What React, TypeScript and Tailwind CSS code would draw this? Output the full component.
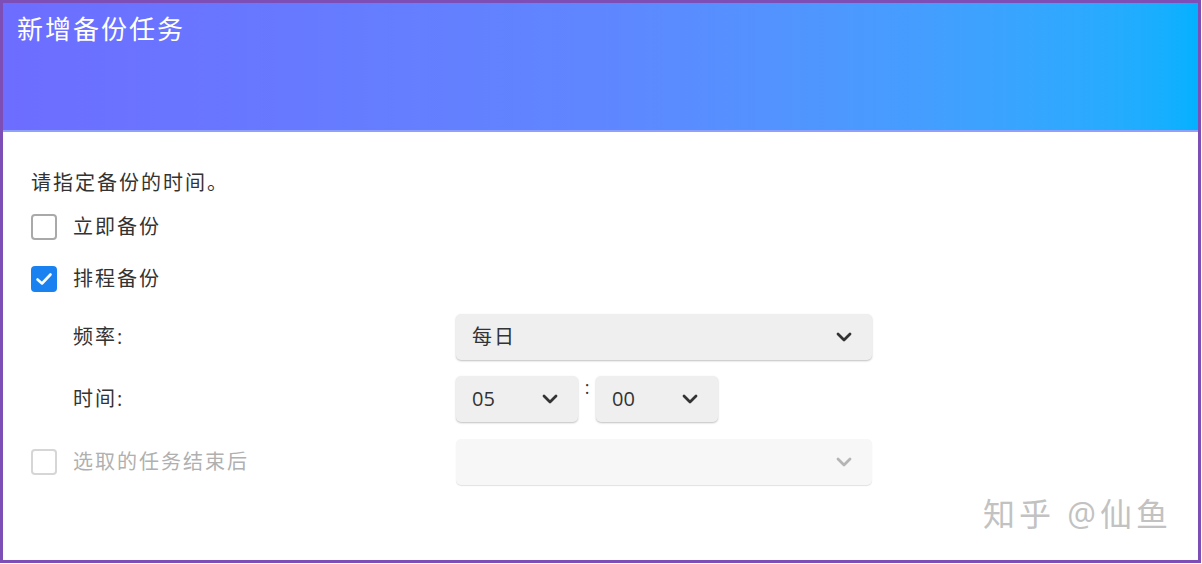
import React from 'react';

const font = { fontFamily: '"Open Sans", "Noto Sans CJK SC", sans-serif' };

function Chevron({ muted = false }: { muted?: boolean }) {
  return (
    <svg width="16" height="10" viewBox="0 0 16 10" aria-hidden>
      <path
        d="M2 2 L8 8 L14 2"
        fill="none"
        stroke={muted ? '#b5b5b5' : '#333333'}
        strokeWidth="2.8"
        strokeLinecap="round"
        strokeLinejoin="round"
      />
    </svg>
  );
}

function Select({ value, width, disabled = false, cjk = false }: { value?: string; width: string; disabled?: boolean; cjk?: boolean }) {
  return (
    <div
      className={`${width} h-[46px] rounded-[5px] flex items-center justify-between pl-4 pr-5 ${
        disabled ? 'bg-[#f7f7f7] shadow-[0_1px_1px_rgba(0,0,0,0.12)]' : 'bg-[#efefef] shadow-[0_1px_2px_rgba(0,0,0,0.25)]'
      }`}
    >
      <span className={`text-[20px] text-[#333] ${cjk ? 'tracking-[2px]' : ''}`}>{value}</span>
      <Chevron muted={disabled} />
    </div>
  );
}

function Box({ checked = false, disabled = false }: { checked?: boolean; disabled?: boolean }) {
  if (checked) {
    return (
      <div className="w-[26px] h-[26px] rounded-[4px] bg-[#1a82f0] flex items-center justify-center">
        <svg width="18" height="14" viewBox="0 0 18 14" aria-hidden>
          <path d="M2.5 7.5 L7 11.5 L15.5 2.5" fill="none" stroke="white" strokeWidth="2.6" strokeLinecap="round" strokeLinejoin="round" />
        </svg>
      </div>
    );
  }
  return (
    <div
      className={`w-[26px] h-[26px] rounded-[4px] border-2 bg-white ${disabled ? 'border-[#d6d6d6]' : 'border-[#a9a9a9]'}`}
    />
  );
}

export default function App() {
  return (
    <div className="w-[1202px] h-[564px] bg-white" style={font}>
      <div className="w-[1201px] h-[563px] border-[3px] border-[#7d4fb6] flex flex-col relative">
        <div className="h-[129px] bg-gradient-to-r from-[#6d6dff] via-[#5f86ff] to-[#02b1fe] border-b-2 border-[#8fa0ff] px-[14px] pt-[9px]">
          <h1 className="text-[26px] tracking-[2px] text-white leading-[34px]">新增备份任务</h1>
        </div>

        <div className="pl-[28px] pt-[38px] text-[#333]">
          <p className="text-[20px] tracking-[2px] leading-[26px]">请指定备份的时间。</p>

          <label className="flex items-center gap-[16px] mt-[17px] h-[28px]">
            <Box />
            <span className="text-[20px] tracking-[2px]">立即备份</span>
          </label>
          <label className="flex items-center gap-[16px] mt-[24px] h-[28px]">
            <Box checked />
            <span className="text-[20px] tracking-[2px]">排程备份</span>
          </label>

          <div className="flex items-center mt-[21px]">
            <span className="w-[425px] pl-[42px] text-[20px] tracking-[2px]">频率:</span>
            <Select value="每日" width="w-[416px]" cjk />
          </div>

          <div className="flex items-center mt-[16px]">
            <span className="w-[425px] pl-[42px] text-[20px] tracking-[2px]">时间:</span>
            <Select value="05" width="w-[122px]" />
            <span className="w-[18px] text-center text-[18px] self-start -mt-[2px]">:</span>
            <Select value="00" width="w-[122px]" />
          </div>

          <div className="flex items-center mt-[17px]">
            <label className="w-[425px] flex items-center gap-[16px]">
              <Box disabled />
              <span className="text-[20px] tracking-[2px] text-[#b0b0b0]">选取的任务结束后</span>
            </label>
            <Select width="w-[416px]" disabled />
          </div>
        </div>

        <div className="absolute right-[26px] bottom-[22px] text-[32px] text-[#c2c2c2] tracking-[4px]">知乎 @仙鱼</div>
      </div>
    </div>
  );
}
